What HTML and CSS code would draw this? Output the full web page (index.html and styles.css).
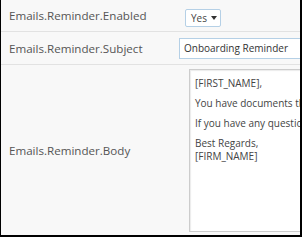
FILE: index.html
```html
<!DOCTYPE html>
<html lang="en">
<head>
  <meta charset="UTF-8">
  <meta name="viewport" content="width=device-width, initial-scale=1.0">
  <title>Email Reminder Settings</title>
  <link rel="stylesheet" href="styles.css">
</head>
<body>

  <!-- Reminder settings table -->
  <div class="settings">
    <div class="row row-enabled">
      <div class="label">Emails.Reminder.Enabled</div>
      <div class="value">
        <div class="select">Yes <span class="caret"></span></div>
      </div>
    </div>
    <div class="row row-subject">
      <div class="label">Emails.Reminder.Subject</div>
      <div class="value">
        <div class="text-input">Onboarding Reminder</div>
      </div>
    </div>
    <div class="row row-body">
      <div class="label">Emails.Reminder.Body</div>
      <div class="value">
        <div class="body-editor">
          <p>[FIRST_NAME],</p>
          <p>You have documents that need your attention.</p>
          <p>If you have any questions, please contact us.</p>
          <p>Best Regards,<br>[FIRM_NAME]</p>
        </div>
      </div>
    </div>
  </div>

</body>
</html>
```

FILE: styles.css
```css
body {
  font-family: 'Open Sans', 'Liberation Sans', sans-serif;
  margin: 0;
  padding: 0;
  background-color: #fff;
}

.settings {
  width: 299px;
  height: 235px;
  overflow: hidden;
  background-color: #f8f8f8;
  border-left: 1px solid #000;
  border-right: 2px solid #000;
  border-bottom: 2px solid #000;
}

.row {
  display: grid;
  grid-template-columns: 174px 1fr;
  align-items: center;
  border-bottom: 1px solid #e2e2e2;
}

.row-enabled {
  height: 31px;
}

.row-subject {
  height: 32px;
}

.row-body {
  height: 170px;
  border-bottom: none;
}

.label {
  padding-left: 8px;
  font-size: 11.6px;
  color: #555;
  white-space: nowrap;
}

.value {
  min-width: 0;
}

.select {
  display: inline-flex;
  align-items: center;
  box-sizing: border-box;
  margin-left: 10px;
  width: 36px;
  height: 18px;
  padding-left: 5px;
  background-color: #fff;
  border: 1px solid #b5d0e6;
  border-radius: 2px;
  font-size: 10px;
  color: #444;
}

.caret {
  margin-left: 4px;
  width: 0;
  height: 0;
  border-left: 3px solid transparent;
  border-right: 3px solid transparent;
  border-top: 4px solid #333;
}

.text-input {
  box-sizing: border-box;
  margin-left: 4px;
  width: 200px;
  height: 21px;
  padding: 3px 4px;
  background-color: #fff;
  border: 1px solid #b5d0e6;
  font-size: 10px;
  line-height: 13px;
  color: #333;
  white-space: nowrap;
}

.body-editor {
  box-sizing: border-box;
  margin-left: 14px;
  width: 200px;
  height: 163px;
  padding: 7px 5px;
  background-color: #fff;
  border: 1px solid #ccc;
  box-shadow: inset 1px 1px 1px rgba(0, 0, 0, 0.08);
  font-size: 10px;
  line-height: 13px;
  color: #444;
  white-space: nowrap;
  overflow: hidden;
}

.body-editor p {
  margin: 0 0 7px;
}
```
